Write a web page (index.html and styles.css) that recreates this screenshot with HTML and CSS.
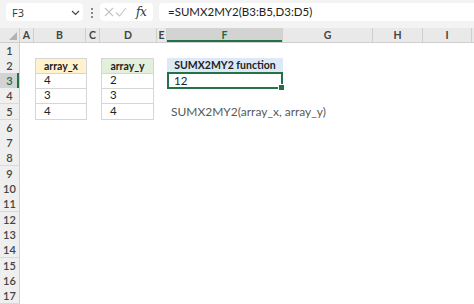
FILE: index.html
```html
<!DOCTYPE html>
<html>
<head>
<meta charset="utf-8">
<link rel="stylesheet" href="styles.css">
</head>
<body>
<div class="app">
  <div class="fbar">
    <div class="namebox">
      <span class="nb-text">F3</span>
      <svg class="chev" width="9" height="6" viewBox="0 0 9 6"><path d="M1 1 L4.5 4.5 L8 1" fill="none" stroke="#444" stroke-width="1.2"/></svg>
    </div>
    <div class="vdots"><span></span><span></span><span></span></div>
    <div class="fbtns">
      <svg class="ic-x" width="10" height="10" viewBox="0 0 10 10"><path d="M1 1 L9 9 M9 1 L1 9" stroke="#c4c4c4" stroke-width="1.1"/></svg>
      <svg class="ic-ok" width="12" height="10" viewBox="0 0 12 10"><path d="M1 5.5 L4.5 9 L11 1" fill="none" stroke="#c4c4c4" stroke-width="1.1"/></svg>
      <span class="fx">fx</span>
    </div>
    <div class="finput">=SUMX2MY2(B3:B5,D3:D5)</div>
  </div>
  <div class="sheet">
    <div class="grow colhdr">
      <div class="corner"><span class="tri"></span></div>
      <div class="ch">A</div>
      <div class="ch">B</div>
      <div class="ch">C</div>
      <div class="ch">D</div>
      <div class="ch">E</div>
      <div class="ch sel">F</div>
      <div class="ch">G</div>
      <div class="ch">H</div>
      <div class="ch">I</div>
      <div class="ch last"></div>
    </div>
    <div class="grow h15"><div class="rh">1</div></div>
    <div class="grow h15">
      <div class="rh">2</div>
      <div class="cell colB tbl thead hx">array_x</div>
      <div class="cell colD tbl thead hy">array_y</div>
      <div class="cell colF fhead">SUMX2MY2 function</div>
    </div>
    <div class="grow h15">
      <div class="rh rsel">3</div>
      <div class="cell colB tbl">4</div>
      <div class="cell colD tbl">2</div>
      <div class="cell colF active">12<span class="handle"></span></div>
    </div>
    <div class="grow h16">
      <div class="rh">4</div>
      <div class="cell colB tbl">3</div>
      <div class="cell colD tbl">3</div>
    </div>
    <div class="grow h16">
      <div class="rh">5</div>
      <div class="cell colB tbl">4</div>
      <div class="cell colD tbl">4</div>
      <div class="cell colF note">SUMX2MY2(array_x, array_y)</div>
    </div>
    <div class="grow h15"><div class="rh">6</div></div>
    <div class="grow h15"><div class="rh">7</div></div>
    <div class="grow h16"><div class="rh">8</div></div>
    <div class="grow h15"><div class="rh">9</div></div>
    <div class="grow h15"><div class="rh">10</div></div>
    <div class="grow h16"><div class="rh">11</div></div>
    <div class="grow h15"><div class="rh">12</div></div>
    <div class="grow h15"><div class="rh">13</div></div>
    <div class="grow h16"><div class="rh">14</div></div>
    <div class="grow h15"><div class="rh">15</div></div>
    <div class="grow h15"><div class="rh">16</div></div>
    <div class="grow h16"><div class="rh">17</div></div>
  </div>
</div>
</body>
</html>
```

FILE: styles.css
```css
html, body {
  margin: 0;
  padding: 0;
  background: #ffffff;
}
.app {
  width: 474px;
  height: 304px;
  overflow: hidden;
  font-family: "Lato", "Open Sans", sans-serif;
  color: #222;
}
.fbar {
  height: 29px;
  box-sizing: border-box;
  background: #f3f3f3;
  display: flex;
  align-items: flex-start;
  padding: 3px 0 0 6px;
  font-family: "Open Sans", "Noto Sans", sans-serif;
}
.namebox {
  flex: 0 0 77px;
  height: 18px;
  box-sizing: border-box;
  background: #fff;
  border-radius: 4px;
  display: flex;
  align-items: center;
  justify-content: space-between;
  padding: 0 3px 0 6px;
  font-size: 11px;
  color: #333;
}
.chev { margin-top: 1px; }
.vdots {
  flex: 0 0 17px;
  display: flex;
  flex-direction: column;
  align-items: center;
  gap: 2px;
  padding-top: 5px;
}
.vdots span {
  width: 2px;
  height: 2px;
  background: #666;
  border-radius: 1px;
}
.fbtns {
  flex: 0 0 53px;
  height: 18px;
  box-sizing: border-box;
  background: #fff;
  border-radius: 4px;
  display: flex;
  align-items: center;
  padding-left: 4px;
}
.ic-x { margin-right: 1px; }
.ic-ok { margin-right: 9px; }
.fx {
  font-family: "DejaVu Serif", "Liberation Serif", serif;
  font-style: italic;
  font-size: 12px;
  color: #333;
  letter-spacing: -0.5px;
}
.finput {
  flex: 1;
  height: 18px;
  margin-left: 6px;
  box-sizing: border-box;
  background: #fff;
  border-radius: 4px 0 0 4px;
  padding-left: 9px;
  font-family: "Lato", sans-serif;
  font-size: 11.5px;
  line-height: 18px;
  color: #222;
}
.sheet {
  display: flex;
  flex-direction: column;
}
.grow {
  display: grid;
  grid-template-columns: 20px 14px 52px 14px 57px 10px 116px 90px 50px 49px 2px;
  position: relative;
}
.h15 { height: 15px; }
.h16 { height: 16px; }
.colhdr {
  height: 14px;
  background: #e9e9e9;
  border-bottom: 1px solid #cfcfcf;
  box-sizing: content-box;
  margin-top: -1px;
}
.corner {
  position: relative;
  border-right: 1px solid #cfcfcf;
}
.tri {
  position: absolute;
  right: 2px;
  bottom: 2px;
  width: 0;
  height: 0;
  border-left: 8px solid transparent;
  border-bottom: 8px solid #b3b3b3;
}
.ch {
  border-right: 1px solid #cfcfcf;
  font-size: 10.5px;
  font-weight: 700;
  color: #444;
  text-align: center;
  line-height: 14px;
}
.ch.sel {
  background: #d3d3d3;
  color: #1e6b3f;
  box-shadow: inset 0 -2px 0 #217346;
}
.ch.last { border-right: none; }
.rh {
  grid-column: 1;
  background: #efefef;
  border-right: 1px solid #cfcfcf;
  border-bottom: 1px solid #dadada;
  box-sizing: border-box;
  text-align: center;
  font-size: 11px;
  font-weight: 600;
  color: #444;
  line-height: 15px;
}
.rh.rsel {
  background: #d3d3d3;
  color: #1e6b3f;
  box-shadow: inset -2px 0 0 #217346;
}
.cell {
  grid-row: 1;
  box-sizing: border-box;
  font-size: 11.5px;
  line-height: 14px;
  padding-left: 8px;
  white-space: nowrap;
}
.colB { grid-column: 3; margin-left: 1px; margin-right: -1px; }
.colD { grid-column: 5; margin-left: 1px; margin-right: 3px; }
.colF { grid-column: 7 / span 2; width: 116px; }
.tbl {
  border: 1px solid #d6d6d6;
  border-top: none;
}
.thead {
  border-top: 1px solid #d6d6d6;
  font-weight: 700;
  font-size: 10.5px;
  text-align: center;
  padding-left: 0;
}
.hx { background: #fff2cc; }
.hy { background: #e2efda; }
.fhead {
  background: #dde9f6;
  font-weight: 700;
  font-size: 10.5px;
  text-align: center;
  padding-left: 0;
}
.active {
  position: relative;
  border: 2px solid #217346;
  margin-top: -1px;
  height: 17px;
  padding-left: 5px;
  line-height: 13px;
}
.handle {
  position: absolute;
  right: -4px;
  bottom: -4px;
  width: 5px;
  height: 5px;
  background: #217346;
  border: 1px solid #fff;
}
.note {
  width: auto;
  padding-left: 4px;
  font-family: "Lato", sans-serif;
  font-size: 12px;
  color: #595959;
  line-height: 16px;
}
```
